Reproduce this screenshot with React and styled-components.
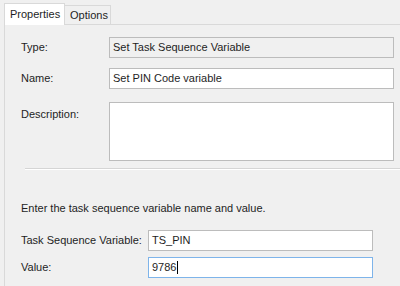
import React from 'react'
import styled, { createGlobalStyle } from 'styled-components'

const GlobalStyle = createGlobalStyle`
  html, body {
    margin: 0;
    background: #f0f0f0;
    overflow: hidden;
  }
  body {
    font-family: 'Liberation Sans', Arial, sans-serif;
    font-size: 11px;
    line-height: 13px;
    color: #1e1e1e;
  }
`

const Wrapper = styled.div`
  width: 400px;
  height: 286px;
  padding: 3px 0 0 4px;
  box-sizing: border-box;
  display: flex;
  flex-direction: column;
`

const TabStrip = styled.div`
  display: flex;
  align-items: flex-end;
  height: 21px;
`

const Tab = styled.div`
  height: ${(p) => (p.active ? '22px' : '19px')};
  width: ${(p) => p.w}px;
  padding-left: ${(p) => (p.active ? '5px' : '5px')};
  box-sizing: border-box;
  display: flex;
  align-items: center;
  background: ${(p) => (p.active ? '#ffffff' : '#f0f0f0')};
  border: 1px solid #d9d9d9;
  border-bottom: none;
  margin-left: ${(p) => (p.active ? '0' : '-1px')};
  margin-bottom: ${(p) => (p.active ? '-1px' : '0')};
  position: relative;
  z-index: ${(p) => (p.active ? 1 : 0)};
`

const Panel = styled.div`
  flex: 1;
  border-left: 1px solid #d9d9d9;
  border-top: 1px solid #d9d9d9;
  padding: 12px 0 0 16px;
  display: flex;
  flex-direction: column;
`

const Row = styled.div`
  display: grid;
  grid-template-columns: ${(p) => p.labelWidth}px ${(p) => p.fieldWidth}px;
  align-items: ${(p) => (p.top ? 'start' : 'center')};
  margin-bottom: ${(p) => p.gap || 0}px;
`

const Label = styled.span`
  padding-top: ${(p) => (p.top ? '6px' : '0')};
  white-space: nowrap;
`

const Field = styled.div`
  height: ${(p) => p.h || 21}px;
  box-sizing: border-box;
  border: 1px solid ${(p) => (p.focus ? '#7eb4ea' : '#bcbcbc')};
  background: ${(p) => (p.disabled ? '#f0f0f0' : '#ffffff')};
  padding: 0 3px;
  display: flex;
  align-items: ${(p) => (p.multiline ? 'flex-start' : 'center')};
  white-space: nowrap;
`

const Caret = styled.span`
  display: inline-block;
  width: 1px;
  height: 13px;
  background: #000;
  margin-left: 1px;
`

const Separator = styled.div`
  height: 0;
  border-top: 1px solid #d5d5d5;
  border-bottom: 1px solid #ffffff;
  margin: 7px 0 0 4px;
`

const Hint = styled.p`
  margin: 32px 0 15px 0;
`

const App = () => {
  return (
    <Wrapper>
      <GlobalStyle />
      <TabStrip>
        <Tab active w={61}>Properties</Tab>
        <Tab w={47}>Options</Tab>
      </TabStrip>
      <Panel>
        <Row labelWidth={88} fieldWidth={285} gap={10}>
          <Label>Type:</Label>
          <Field disabled>Set Task Sequence Variable</Field>
        </Row>
        <Row labelWidth={88} fieldWidth={285} gap={13}>
          <Label>Name:</Label>
          <Field>Set PIN Code variable</Field>
        </Row>
        <Row labelWidth={88} fieldWidth={285} top>
          <Label top>Description:</Label>
          <Field h={59} multiline />
        </Row>
        <Separator />
        <Hint>Enter the task sequence variable name and value.</Hint>
        <Row labelWidth={127} fieldWidth={225} gap={6}>
          <Label>Task Sequence Variable:</Label>
          <Field>TS_PIN</Field>
        </Row>
        <Row labelWidth={127} fieldWidth={225}>
          <Label>Value:</Label>
          <Field focus>9786<Caret /></Field>
        </Row>
      </Panel>
    </Wrapper>
  )
}

export default App
